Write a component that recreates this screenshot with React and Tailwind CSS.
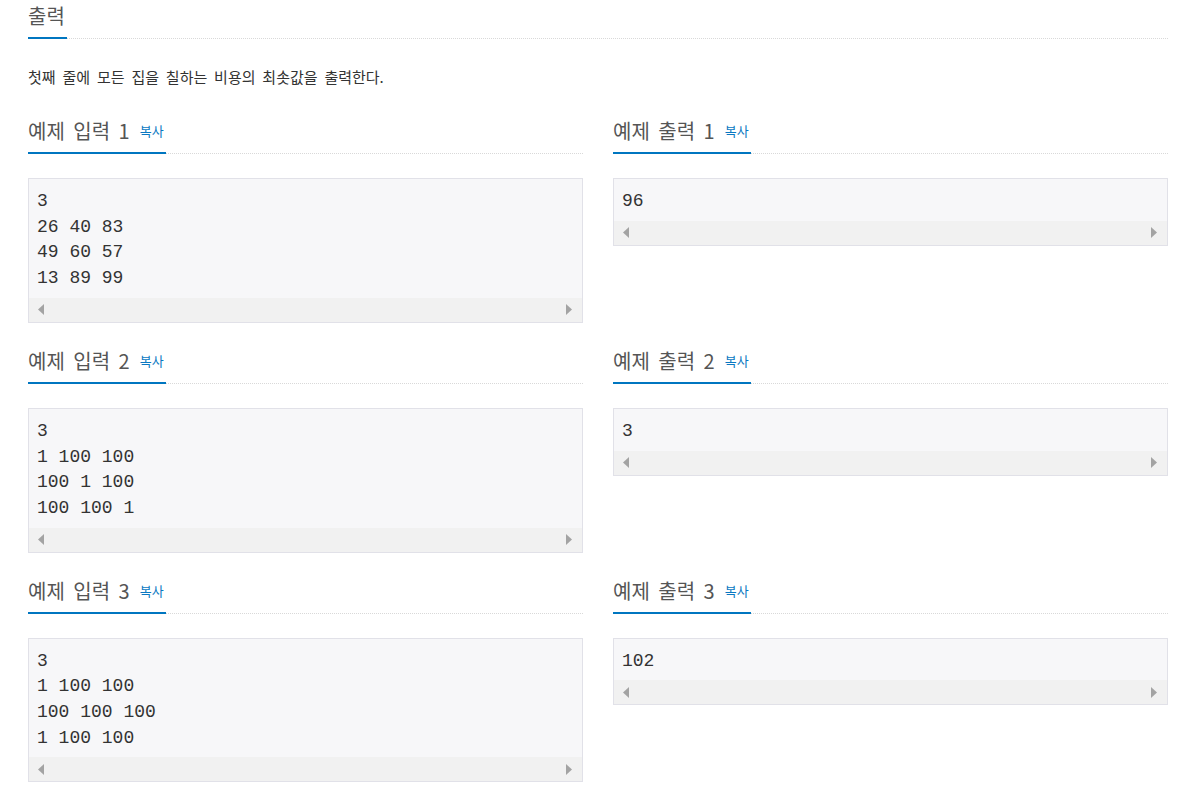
import React from "react";

const samples = [
  { input: "3\n26 40 83\n49 60 57\n13 89 99", output: "96" },
  { input: "3\n1 100 100\n100 1 100\n100 100 1", output: "3" },
  { input: "3\n1 100 100\n100 100 100\n1 100 100", output: "102" },
];

function Headline({ title, copy }) {
  return (
    <div className="flex border-b border-dotted border-[#d9d9d9]">
      <h2 className="mb-[-1px] flex items-start border-b-2 border-[#0076c0] pb-[6px] pr-[2px] text-[20px] font-normal leading-[30px] text-[#555] [word-spacing:4px]">
        <span>{title}</span>
        {copy && (
          <span className="ml-[10px] mt-[5px] text-[13px] leading-[20px] text-[#0a78c2] [word-spacing:0px]">
            복사
          </span>
        )}
      </h2>
    </div>
  );
}

function Arrow({ dir }) {
  return (
    <svg width="6" height="11" viewBox="0 0 6 11" className="block">
      {dir === "left" ? (
        <polygon points="6,0 6,11 0,5.5" fill="#a3a3a3" />
      ) : (
        <polygon points="0,0 0,11 6,5.5" fill="#a3a3a3" />
      )}
    </svg>
  );
}

function SampleBox({ text }) {
  return (
    <div className="border border-[#e1e1e8] bg-[#f7f7f9]">
      <pre className="m-0 overflow-hidden px-[8px] pt-[10px] pb-[6px] font-['Liberation_Mono',monospace] text-[18px] leading-[1.42857] text-[#333]">
        {text}
      </pre>
      <div className="flex h-[24px] items-center justify-between bg-[#f1f1f1] pl-[9px] pr-[10px]">
        <Arrow dir="left" />
        <Arrow dir="right" />
      </div>
    </div>
  );
}

export default function App() {
  return (
    <div className="min-h-[795px] bg-white font-['Noto_Sans_CJK_KR','Noto_Sans',sans-serif]">
      <div className="ml-[28px] w-[1140px] pt-[1px]">
        <Headline title="출력" />
        <p className="mt-[28px] text-[15px] leading-[20px] text-[#333] [word-spacing:3.5px]">
          첫째 줄에 모든 집을 칠하는 비용의 최솟값을 출력한다.
        </p>
        {samples.map((s, i) => (
          <div
            key={i}
            className={
              "grid grid-cols-2 items-start gap-x-[30px] " +
              (i === 0 ? "mt-[29px]" : "mt-[23px]")
            }
          >
            <div>
              <Headline title={"예제 입력 " + (i + 1)} copy />
              <div className="mt-[24px]">
                <SampleBox text={s.input} />
              </div>
            </div>
            <div>
              <Headline title={"예제 출력 " + (i + 1)} copy />
              <div className="mt-[24px]">
                <SampleBox text={s.output} />
              </div>
            </div>
          </div>
        ))}
      </div>
    </div>
  );
}
